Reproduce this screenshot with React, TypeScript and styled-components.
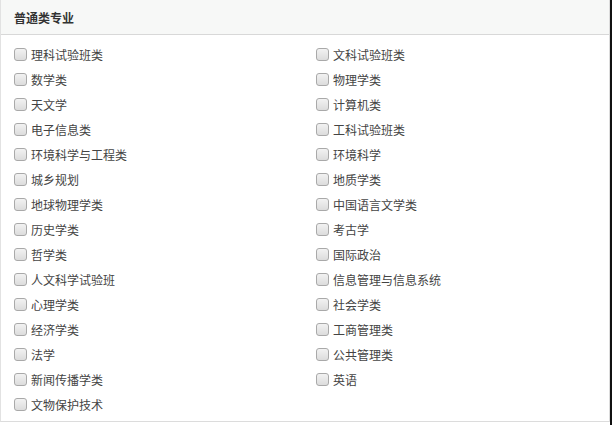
import styled, { createGlobalStyle } from 'styled-components';

const LEFT = [
  '理科试验班类',
  '数学类',
  '天文学',
  '电子信息类',
  '环境科学与工程类',
  '城乡规划',
  '地球物理学类',
  '历史学类',
  '哲学类',
  '人文科学试验班',
  '心理学类',
  '经济学类',
  '法学',
  '新闻传播学类',
  '文物保护技术',
];

const RIGHT = [
  '文科试验班类',
  '物理学类',
  '计算机类',
  '工科试验班类',
  '环境科学',
  '地质学类',
  '中国语言文学类',
  '考古学',
  '国际政治',
  '信息管理与信息系统',
  '社会学类',
  '工商管理类',
  '公共管理类',
  '英语',
];

export default function App() {
  const rows: string[] = [];
  LEFT.forEach((name, i) => {
    rows.push(name);
    if (RIGHT[i]) rows.push(RIGHT[i]);
  });

  return (
    <>
      <GlobalStyle />
      <StyledPage>
        <StyledPanel>
          <StyledHeader>
            <StyledTitle>普通类专业</StyledTitle>
          </StyledHeader>
          <StyledGrid>
            {rows.map((name) => (
              <StyledItem key={name}>
                <StyledBox type="checkbox" />
                <span>{name}</span>
              </StyledItem>
            ))}
          </StyledGrid>
        </StyledPanel>
        <StyledEdge />
      </StyledPage>
    </>
  );
}

const GlobalStyle = createGlobalStyle`
  html, body {
    margin: 0;
    padding: 0;
    background: #fff;
  }
  body {
    font-family: "Noto Sans CJK SC", "Liberation Sans", sans-serif;
  }
`;

const StyledPage = styled.div`
  width: 612px;
  height: 425px;
  display: flex;
  overflow: hidden;
`;

const StyledPanel = styled.section`
  width: 610px;
  height: 422px;
  box-sizing: border-box;
  border: 1px solid #dcdcdc;
  border-top: none;
  border-left-color: #e2e2e2;
  display: flex;
  flex-direction: column;
`;

const StyledEdge = styled.div`
  width: 2px;
  background: #111;
`;

const StyledHeader = styled.header`
  height: 34px;
  background: #f7f8f7;
  border-bottom: 1px solid #d8d8d8;
  display: flex;
  align-items: center;
  padding-left: 13px;
`;

const StyledTitle = styled.h1`
  margin: 0;
  font-size: 12px;
  font-weight: 700;
  color: #333;
`;

const StyledGrid = styled.div`
  display: grid;
  grid-template-columns: 302px 1fr;
  grid-auto-rows: 25px;
  padding: 7px 0 0 13px;
`;

const StyledItem = styled.label`
  display: flex;
  align-items: center;
  gap: 4px;
  font-size: 12px;
  color: #444;
`;

const StyledBox = styled.input`
  appearance: none;
  margin: 0;
  width: 13px;
  height: 13px;
  border: 1px solid #a9a9a9;
  border-radius: 3px;
  background: linear-gradient(#f2f2f2, #dcdcdc);
  box-sizing: border-box;
`;
